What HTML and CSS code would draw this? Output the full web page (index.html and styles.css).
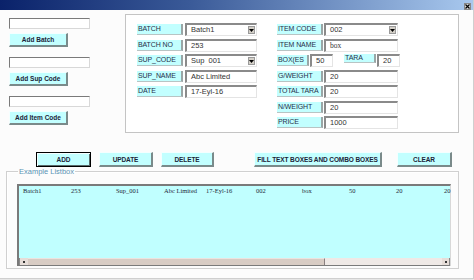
FILE: index.html
```html
<!DOCTYPE html>
<html>
<head>
<meta charset="utf-8">
<link rel="stylesheet" href="styles.css">
</head>
<body>
<div class="window">
  <div class="titlebar">
    <div class="close">
      <svg width="5" height="5" viewBox="0 0 5 5"><path d="M0.5 0.5L4.5 4.5M4.5 0.5L0.5 4.5" stroke="#000" stroke-width="1.2"/></svg>
    </div>
  </div>
  <div class="main">
    <div class="leftcol">
      <div class="tb"></div>
      <div class="btn small">Add Batch</div>
      <div class="tb"></div>
      <div class="btn small">Add Sup Code</div>
      <div class="tb"></div>
      <div class="btn small">Add Item Code</div>
    </div>
    <div class="panel">
      <div class="col col-left">
        <div class="row"><div class="lbl">BATCH</div><div class="inp combo">Batch1<span class="arrow"><svg width="5" height="3" viewBox="0 0 5 3"><path d="M0 0H5L2.5 3Z" fill="#000"/></svg></span></div></div>
        <div class="row"><div class="lbl">BATCH NO</div><div class="inp">253</div></div>
        <div class="row"><div class="lbl">SUP_CODE</div><div class="inp combo">Sup&nbsp; 001<span class="arrow"><svg width="5" height="3" viewBox="0 0 5 3"><path d="M0 0H5L2.5 3Z" fill="#000"/></svg></span></div></div>
        <div class="row"><div class="lbl">SUP_NAME</div><div class="inp">Abc Limited</div></div>
        <div class="row"><div class="lbl">DATE</div><div class="inp">17-Eyl-16</div></div>
      </div>
      <div class="col col-right">
        <div class="row"><div class="lbl">ITEM CODE</div><div class="inp combo">002<span class="arrow"><svg width="5" height="3" viewBox="0 0 5 3"><path d="M0 0H5L2.5 3Z" fill="#000"/></svg></span></div></div>
        <div class="row"><div class="lbl">ITEM NAME</div><div class="inp serif">box</div></div>
        <div class="row"><div class="lbl short">BOX(ES</div><div class="inp tiny">50</div><div class="lbl short tara">TARA</div><div class="inp tiny tara-inp">20</div></div>
        <div class="row"><div class="lbl">G/WEIGHT</div><div class="inp">20</div></div>
        <div class="row"><div class="lbl">TOTAL TARA</div><div class="inp">20</div></div>
        <div class="row"><div class="lbl">N/WEIGHT</div><div class="inp">20</div></div>
        <div class="row"><div class="lbl">PRICE</div><div class="inp">1000</div></div>
      </div>
    </div>
  </div>
  <div class="actions">
    <div class="btn act add">ADD</div>
    <div class="btn act update">UPDATE</div>
    <div class="btn act delete">DELETE</div>
    <div class="btn act fill">FILL TEXT BOXES AND COMBO BOXES</div>
    <div class="btn act clear">CLEAR</div>
  </div>
  <fieldset class="group">
    <legend>Example Listbox</legend>
    <div class="listbox">
      <div class="items">
        <div class="item">
          <span>Batch1</span><span>253</span><span>Sup_001</span><span>Abc Limited</span><span>17-Eyl-16</span><span>002</span><span>box</span><span>50</span><span>20</span><span>20</span>
        </div>
      </div>
      <div class="hscroll">
        <div class="sbtn"><span class="dot"></span></div>
        <div class="thumb"></div>
        <div class="track"></div>
        <div class="sbtn"><span class="dot"></span></div>
      </div>
    </div>
  </fieldset>
</div>
</body>
</html>
```
FILE: styles.css
```css
html, body {
  margin: 0;
  padding: 0;
}
body {
  width: 474px;
  height: 280px;
  background: #e6e6e6;
  font-family: "Liberation Sans", Arial, sans-serif;
  overflow: hidden;
}
.window {
  box-sizing: border-box;
  width: 474px;
  height: 279px;
  background: #fcfcfc;
  border-right: 1px solid #cfcfcf;
  border-bottom: 1px solid #cfcfcf;
}
.titlebar {
  height: 10px;
  box-sizing: border-box;
  background: linear-gradient(to right, #0a226a 0%, #3a5a98 40%, #a8c8ee 100%);
  display: flex;
  justify-content: flex-end;
  padding-top: 3px;
  padding-right: 2px;
}
.close {
  width: 7px;
  height: 7px;
  box-sizing: border-box;
  background: #d8d8d8;
  border: 1px solid #888;
  display: flex;
  align-items: center;
  justify-content: center;
}
.close svg { display: block; }

.main {
  display: flex;
  padding-left: 9px;
}
.leftcol {
  width: 81px;
  margin-top: 8px;
  display: flex;
  flex-direction: column;
}
.tb {
  height: 11px;
  box-sizing: border-box;
  background: #fff;
  border-top: 1px solid #7a7a7a;
  border-left: 1px solid #7a7a7a;
  border-right: 1px solid #d8d8d8;
  border-bottom: 1px solid #d8d8d8;
}
.btn {
  box-sizing: border-box;
  background: #c2ffff;
  border-top: 1px solid #f4ffff;
  border-left: 1px solid #f4ffff;
  border-right: 2px solid #7a8a8a;
  border-bottom: 2px solid #7a8a8a;
  color: #1c2438;
  font-weight: bold;
  display: flex;
  align-items: center;
  justify-content: center;
  white-space: nowrap;
}
.btn.small {
  width: 59px;
  height: 14px;
  margin-top: 4px;
  margin-bottom: 10px;
  font-size: 6.5px;
}
.panel {
  margin-left: 35px;
  margin-top: 4px;
  width: 334px;
  height: 119px;
  box-sizing: border-box;
  border: 1px solid #c4c4c4;
  background: #fff;
  padding: 8px 0 0 11px;
  display: flex;
  gap: 20px;
}
.col {
  display: flex;
  flex-direction: column;
  gap: 2.5px;
}
.row {
  display: flex;
  align-items: center;
  height: 13px;
}
.lbl {
  box-sizing: border-box;
  width: 46px;
  height: 11px;
  background: #c2ffff;
  border-right: 2px solid #9aa6a6;
  border-bottom: 1px solid #b8c4c4;
  font-size: 7px;
  line-height: 10px;
  color: #26304a;
  padding-left: 1px;
  white-space: nowrap;
  overflow: hidden;
  letter-spacing: -0.1px;
}
.inp {
  box-sizing: border-box;
  height: 13px;
  width: 72px;
  margin-left: 2px;
  background: #fff;
  border-top: 2px solid #8a8a8a;
  border-left: 2px solid #8a8a8a;
  border-right: 1px solid #e4e4e4;
  border-bottom: 1px solid #e4e4e4;
  font-size: 7.5px;
  line-height: 10px;
  color: #333;
  padding-left: 4px;
  display: flex;
  align-items: center;
  white-space: nowrap;
}
.col-right .inp {
  width: 74px;
  margin-left: 1px;
}
.inp.serif {
  font-family: "Liberation Serif", "Times New Roman", serif;
}
.combo {
  justify-content: space-between;
  padding-right: 1px;
}
.arrow {
  width: 7px;
  height: 8px;
  box-sizing: border-box;
  background: #d4d0c8;
  border: 1px solid #9a9a9a;
  display: flex;
  align-items: center;
  justify-content: center;
}
.arrow svg { display: block; }
.lbl.short {
  width: 32px;
}
.col-right .inp.tiny {
  width: 23px;
  margin-left: 1px;
}
.lbl.tara {
  margin-left: 11px;
  align-self: flex-start;
  height: 9px;
  line-height: 8px;
}
.col-right .inp.tara-inp {
  width: 23px;
  margin-left: 1px;
}

.actions {
  display: flex;
  margin-top: 17px;
  height: 15px;
}
.btn.act {
  height: 15px;
  font-size: 6.5px;
  letter-spacing: -0.1px;
}
.add {
  margin-left: 36px;
  width: 55px;
  border: 1px solid #000;
  box-shadow: inset 1px 1px 0 #f4ffff, inset -1px -1px 0 #5a6a6a;
}
.update { margin-left: 8px; width: 54px; }
.delete { margin-left: 8px; width: 53px; }
.fill { margin-left: 40px; width: 128px; }
.clear { margin-left: 15px; width: 55px; }

.group {
  margin: 0 0 0 6px;
  width: 453px;
  box-sizing: border-box;
  border: 1px solid #d0d0d0;
  box-shadow: inset 1px 1px 0 #fff;
  padding: 8px 6px 2px 10px;
}
.group legend {
  margin-left: 1px;
  padding: 0 1px;
  font-size: 7.5px;
  line-height: 9px;
  color: #5a94b4;
}
.listbox {
  box-sizing: border-box;
  width: 434px;
  height: 82px;
  background: #c0ffff;
  border-top: 2px solid #7a7a7a;
  border-left: 2px solid #7a7a7a;
  border-right: 1px solid #d8d8d8;
  display: flex;
  flex-direction: column;
}
.items {
  flex: 1;
  padding: 1px 0 0 4px;
}
.item {
  display: grid;
  grid-template-columns: 48px 45px 48px 42px 50px 46px 47px 47px 48px auto;
  font-family: "Liberation Serif", "Times New Roman", serif;
  font-size: 6.5px;
  line-height: 8px;
  color: #1e2a3a;
  white-space: nowrap;
}
.hscroll {
  height: 8px;
  display: flex;
  border-bottom: 1px solid #7a7a7a;
  box-sizing: border-box;
}
.sbtn {
  width: 8px;
  box-sizing: border-box;
  background: #e6ddd8;
  border-right: 1px solid #8a8a8a;
  display: flex;
  align-items: center;
  justify-content: center;
}
.sbtn:first-child {
  width: 9px;
  border-right: none;
  border-left: 1px solid #8a8a8a;
}
.dot {
  width: 2px;
  height: 2px;
  background: #333;
}
.thumb {
  width: 296px;
  background: #d8ccc4;
  border-right: 1px solid #8a8080;
  border-top: 1px solid #ece4e0;
}
.track {
  flex: 1;
  background: #efe9e6;
}
```
